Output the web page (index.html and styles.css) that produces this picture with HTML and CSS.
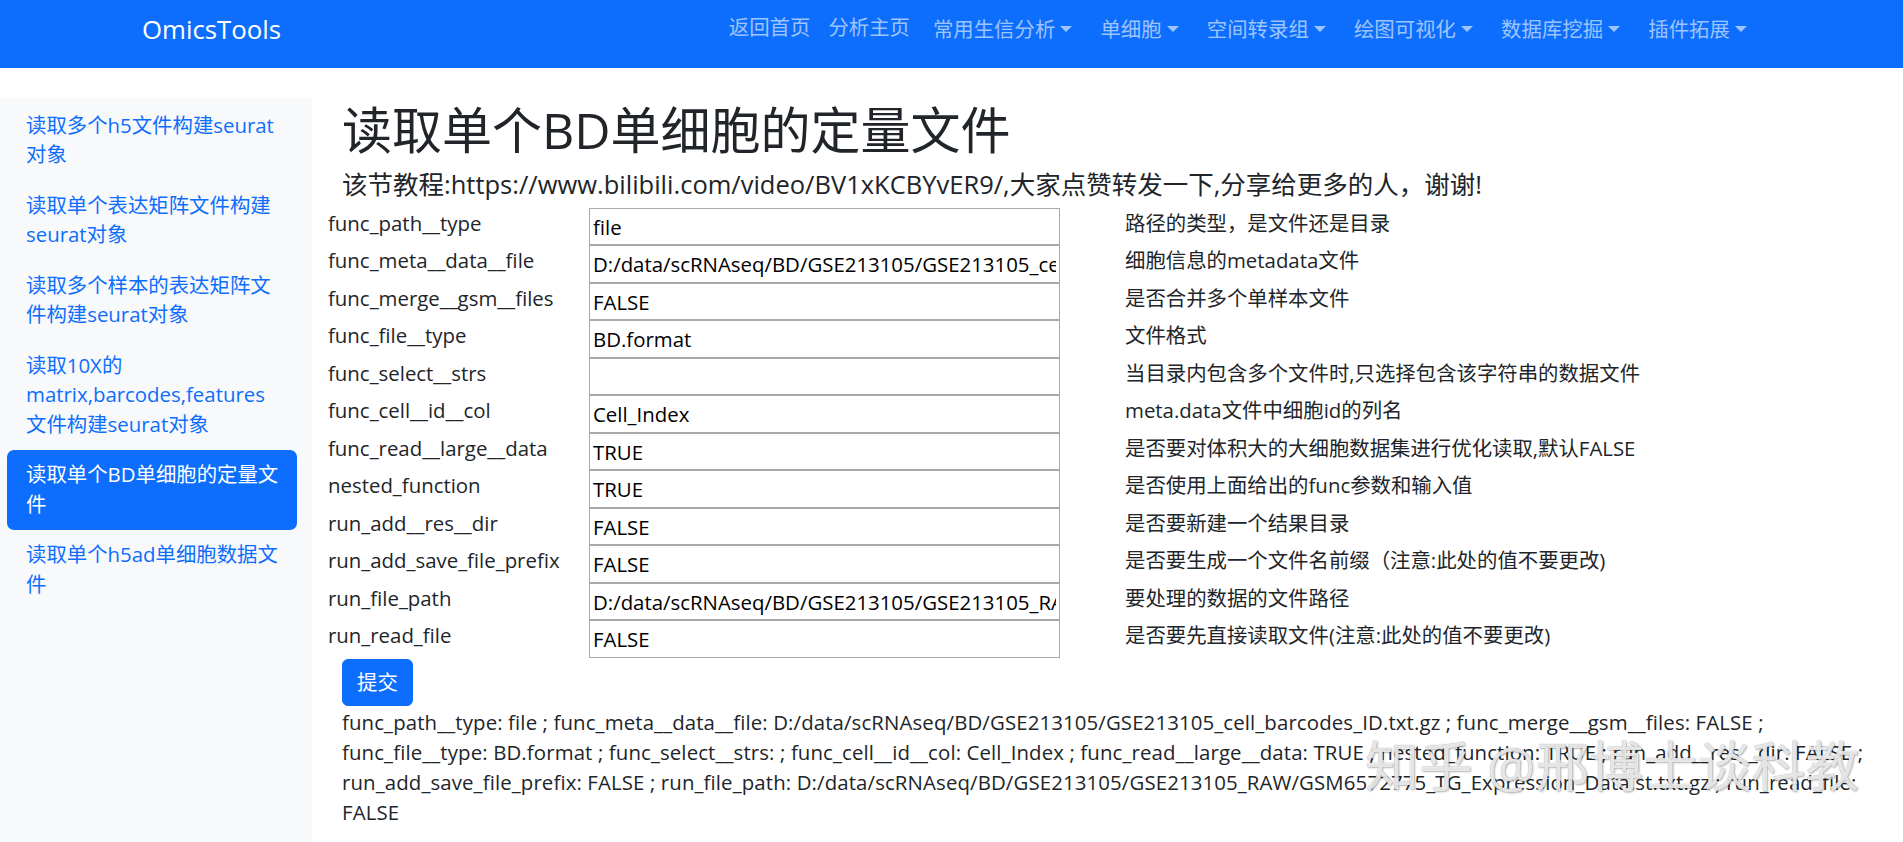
FILE: index.html
```html
<!DOCTYPE html>
<html lang="zh-CN">
<head>
<meta charset="utf-8">
<title>OmicsTools - 读取单个BD单细胞的定量文件</title>
<link rel="stylesheet" href="styles.css">
</head>
<body>
<header class="navbar">
  <a class="brand" href="#">OmicsTools</a>
  <ul class="nav">
    <li><a class="nav-link plain" href="#">返回首页</a></li>
    <li><a class="nav-link plain" href="#">分析主页</a></li>
    <li><a class="nav-link dropdown" href="#">常用生信分析</a></li>
    <li><a class="nav-link dropdown" href="#">单细胞</a></li>
    <li><a class="nav-link dropdown" href="#">空间转录组</a></li>
    <li><a class="nav-link dropdown" href="#">绘图可视化</a></li>
    <li><a class="nav-link dropdown" href="#">数据库挖掘</a></li>
    <li><a class="nav-link dropdown" href="#">插件拓展</a></li>
  </ul>
</header>

<div class="page">
  <aside class="sidebar">
    <nav class="side-nav">
      <a class="side-link" href="#">读取多个h5文件构建seurat<br>对象</a>
      <a class="side-link" href="#">读取单个表达矩阵文件构建<br>seurat对象</a>
      <a class="side-link" href="#">读取多个样本的表达矩阵文<br>件构建seurat对象</a>
      <a class="side-link" href="#">读取10X的<br>matrix,barcodes,features<br>文件构建seurat对象</a>
      <a class="side-link active" href="#">读取单个BD单细胞的定量文<br>件</a>
      <a class="side-link" href="#">读取单个h5ad单细胞数据文<br>件</a>
    </nav>
  </aside>

  <main class="content">
    <h1 class="title">读取单个BD单细胞的定量文件</h1>
    <h5 class="subtitle">该节教程:https://www.bilibili.com/video/BV1xKCBYvER9/,大家点赞转发一下,分享给更多的人，谢谢!</h5>

    <form class="params">
      <label class="p-label">func_path__type</label>
      <input class="p-input" type="text" value="file">
      <span class="p-desc">路径的类型，是文件还是目录</span>

      <label class="p-label">func_meta__data__file</label>
      <input class="p-input" type="text" value="D:/data/scRNAseq/BD/GSE213105/GSE213105_cell_barcodes_ID.txt.gz">
      <span class="p-desc">细胞信息的metadata文件</span>

      <label class="p-label">func_merge__gsm__files</label>
      <input class="p-input" type="text" value="FALSE">
      <span class="p-desc">是否合并多个单样本文件</span>

      <label class="p-label">func_file__type</label>
      <input class="p-input" type="text" value="BD.format">
      <span class="p-desc">文件格式</span>

      <label class="p-label">func_select__strs</label>
      <input class="p-input" type="text" value="">
      <span class="p-desc">当目录内包含多个文件时,只选择包含该字符串的数据文件</span>

      <label class="p-label">func_cell__id__col</label>
      <input class="p-input" type="text" value="Cell_Index">
      <span class="p-desc">meta.data文件中细胞id的列名</span>

      <label class="p-label">func_read__large__data</label>
      <input class="p-input" type="text" value="TRUE">
      <span class="p-desc">是否要对体积大的大细胞数据集进行优化读取,默认FALSE</span>

      <label class="p-label">nested_function</label>
      <input class="p-input" type="text" value="TRUE">
      <span class="p-desc">是否使用上面给出的func参数和输入值</span>

      <label class="p-label">run_add__res__dir</label>
      <input class="p-input" type="text" value="FALSE">
      <span class="p-desc">是否要新建一个结果目录</span>

      <label class="p-label">run_add_save_file_prefix</label>
      <input class="p-input" type="text" value="FALSE">
      <span class="p-desc">是否要生成一个文件名前缀（注意:此处的值不要更改)</span>

      <label class="p-label">run_file_path</label>
      <input class="p-input" type="text" value="D:/data/scRNAseq/BD/GSE213105/GSE213105_RAW/GSM6572775_TG_Expression_Data.st.txt.gz">
      <span class="p-desc">要处理的数据的文件路径</span>

      <label class="p-label">run_read_file</label>
      <input class="p-input" type="text" value="FALSE">
      <span class="p-desc">是否要先直接读取文件(注意:此处的值不要更改)</span>
    </form>

    <button class="btn-submit" type="button">提交</button>

    <p class="output">func_path__type: file ; func_meta__data__file: D:/data/scRNAseq/BD/GSE213105/GSE213105_cell_barcodes_ID.txt.gz ; func_merge__gsm__files: FALSE ;<br>func_file__type: BD.format ; func_select__strs: ; func_cell__id__col: Cell_Index ; func_read__large__data: TRUE ; nested_function: TRUE ; run_add__res__dir: FALSE ;<br>run_add_save_file_prefix: FALSE ; run_file_path: D:/data/scRNAseq/BD/GSE213105/GSE213105_RAW/GSM6572775_TG_Expression_Data.st.txt.gz ; run_read_file:<br>FALSE</p>
  </main>
</div>

<div class="watermark">知乎 @邢博士谈科教</div>
</body>
</html>
```

FILE: styles.css
```css
* {
  box-sizing: border-box;
}

html, body {
  margin: 0;
  padding: 0;
}

body {
  font-family: "Open Sans", "Noto Sans CJK SC", sans-serif;
  font-size: 20.4px;
  line-height: 28.8px;
  color: #212529;
  background: #fff;
  overflow: hidden;
  position: relative;
  min-height: 842px;
}

a {
  text-decoration: none;
}

/* ---------- navbar ---------- */
.navbar {
  height: 68px;
  background: #0d6efd;
  display: flex;
  align-items: flex-start;
  padding: 0 142px;
}

.brand {
  color: #fff;
  font-size: 25.8px;
  line-height: 36px;
  padding-top: 11px;
}

.nav {
  list-style: none;
  margin: 0 0 0 auto;
  padding: 13px 0 0;
  display: flex;
}

.nav-link {
  display: block;
  color: rgba(255, 255, 255, 0.6);
  line-height: 28.8px;
}

.nav-link.plain {
  padding: 0 9px;
}

.nav-link.dropdown {
  padding: 2px 14px 0;
}

.nav-link.dropdown::after {
  content: "";
  display: inline-block;
  margin-left: 0.255em;
  vertical-align: 0.255em;
  border-top: 0.3em solid;
  border-right: 0.3em solid transparent;
  border-left: 0.3em solid transparent;
  border-bottom: 0;
}

/* ---------- layout ---------- */
.page {
  display: flex;
  min-height: calc(842px - 68px);
  padding-top: 30px;
}

.sidebar {
  width: 312px;
  flex: none;
  background: #f8f9fa;
  padding: 2px 15px 0 7px;
}

.side-nav {
  display: flex;
  flex-direction: column;
  gap: 0;
}

.side-link {
  display: block;
  color: #0d6efd;
  padding: 10.5px 19px;
  line-height: 29.5px;
  border-radius: 7px;
  white-space: nowrap;
}

.side-link.active {
  background: #0d6efd;
  color: #fff;
}

.content {
  flex: 1;
  padding: 2px 0 0 16px;
}

.title {
  margin: 0 0 9.6px 14px;
  font-size: 50px;
  line-height: 60px;
  font-weight: 400;
}

.subtitle {
  margin: 0 0 9.6px 14px;
  font-size: 25.5px;
  line-height: 28.8px;
  font-weight: 400;
  white-space: nowrap;
}

/* ---------- params form ---------- */
.params {
  display: grid;
  grid-template-columns: 261px 471px 1fr;
  grid-auto-rows: 37.5px;
  margin: 0;
}

.p-label {
  padding-top: 1px;
  white-space: nowrap;
}

.p-input {
  width: 471px;
  height: 37.5px;
  margin: 0;
  border: 1px solid #a9a9a9;
  padding: 0 3px;
  font-family: inherit;
  font-size: 20.4px;
  color: #000;
  background: #fff;
  outline: none;
}

.p-desc {
  padding: 1px 0 0 65px;
  white-space: nowrap;
}

.btn-submit {
  display: block;
  margin: 1px 0 0 14px;
  padding: 8px 14px;
  font-family: inherit;
  font-size: 20.4px;
  line-height: 28.8px;
  color: #fff;
  background: #0d6efd;
  border: 1px solid #0d6efd;
  border-radius: 6px;
}

.output {
  margin: 1px 0 0 14px;
  line-height: 30px;
  letter-spacing: 0.12px;
  white-space: nowrap;
}

/* ---------- watermark overlay ---------- */
.watermark {
  position: absolute;
  left: 1365px;
  top: 737px;
  font-size: 54px;
  line-height: 58px;
  color: rgba(255, 255, 255, 0.8);
  text-shadow: 0 0 1px rgba(90, 90, 90, 0.7), 1px 1px 2px rgba(0, 0, 0, 0.25);
  white-space: nowrap;
  pointer-events: none;
}
```
